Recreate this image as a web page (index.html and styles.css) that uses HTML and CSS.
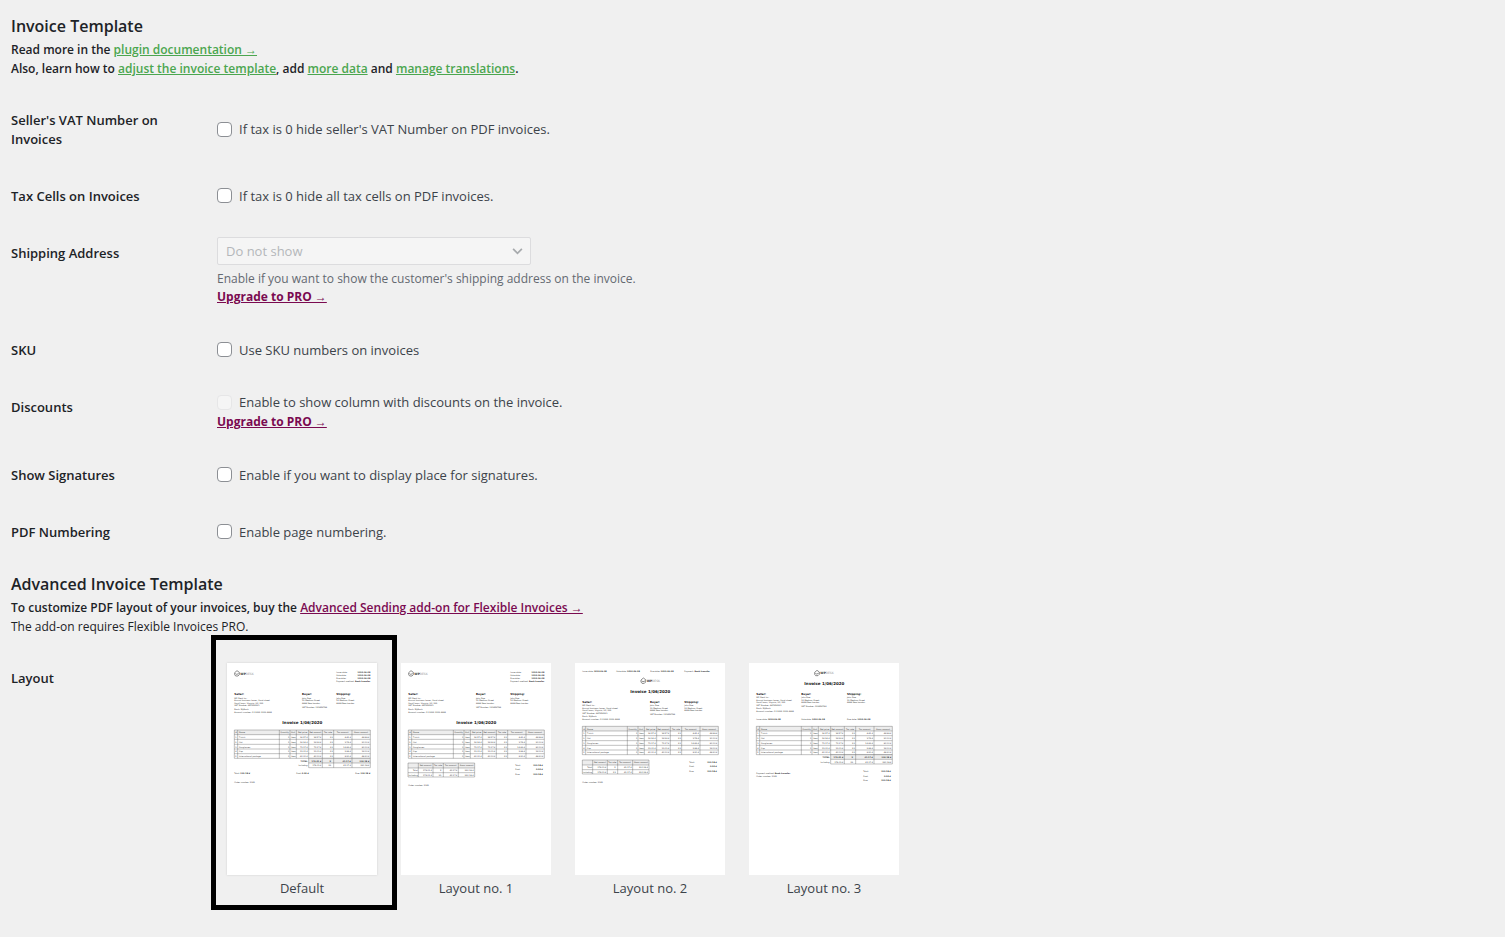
FILE: index.html
```html
<!DOCTYPE html>
<html lang="en">
<head>
  <meta charset="utf-8">
  <title>Invoice Template</title>
  <link rel="stylesheet" href="styles.css">
</head>
<body>
  <!-- Shared parts of the layout previews -->
  <svg class="defs" aria-hidden="true">
    <defs>
      <g id="logo">
        <path d="M8 1 L15 6 L15 13 L11 17 L4 17 L1 13 L1 7 Z M3 10 Q6 14 13 10" fill="none" stroke="#555" stroke-width="2"/>
        <text x="18" y="13" class="logo-bold">WP</text>
        <text x="34" y="13" class="logo-thin">DESK</text>
      </g>
      <g id="dates">
        <text x="328" y="29">Issue date:</text><text x="430" y="29" class="b end">2020-06-08</text>
        <text x="328" y="38">Sale date:</text><text x="430" y="38" class="b end">2020-06-08</text>
        <text x="328" y="47">Due date:</text><text x="430" y="47" class="b end">2020-06-08</text>
        <text x="328" y="56">Payment method:</text><text x="430" y="56" class="b end">Bank transfer</text>
      </g>
      <g id="seller">
        <text x="0" y="0" class="h">Seller:</text>
        <text x="0" y="10">WP Desk Inc.</text>
        <text x="0" y="18">Annual business tower, Sand street</text>
        <text x="0" y="25">Small town, Virginia, US, 222</text>
        <text x="0" y="33">VAT Number: 987654321</text>
        <text x="0" y="43">Bank: MyBank</text>
        <text x="0" y="52">Account number: 11 2222 3333 4444</text>
      </g>
      <g id="buyer">
        <text x="0" y="0" class="h">Buyer:</text>
        <text x="0" y="10">John Doe</text>
        <text x="0" y="18">12 Medium Street</text>
        <text x="0" y="26">8888 New London</text>
        <text x="0" y="38">VAT Number: 123456789</text>
      </g>
      <g id="shipping">
        <text x="0" y="0" class="h">Shipping:</text>
        <text x="0" y="10">John Doe</text>
        <text x="0" y="18">12 Medium Street</text>
        <text x="0" y="26">8888 New London</text>
      </g>
      <g id="items">
        <path d="M22 0H430V14H22Z" fill="#ededed"/>
        <path d="M22 0H430V85H22Z M22 14H430 M22 28H430 M22 43H430 M22 57H430 M22 71H430 M32 0V85 M157 0V85 M189 0V85 M208 0V85 M245 0V85 M286 0V85 M320 0V85 M375 0V85" class="rule"/>
        <text x="25" y="10">#</text><text x="36" y="10">Name</text>
        <g class="mid">
          <text x="173" y="10">Quantity</text><text x="198" y="10">Unit</text><text x="227" y="10">Net price</text><text x="265" y="10">Net amount</text><text x="303" y="10">Tax rate</text><text x="347" y="10">Tax amount</text><text x="402" y="10">Gross amount</text>
        </g>
        <text x="25" y="24">1</text><text x="36" y="24">T-shirt</text>
        <text x="25" y="38">2</text><text x="36" y="38">Hat</text>
        <text x="25" y="53">3</text><text x="36" y="53">Sunglasses</text>
        <text x="25" y="67">4</text><text x="36" y="67">Cap</text>
        <text x="25" y="81">5</text><text x="36" y="81">International package</text>
        <g class="end">
          <text x="187" y="24">1</text><text x="206" y="24">item</text><text x="242" y="24">36.57 €</text><text x="283" y="24">36.57 €</text><text x="317" y="24">23</text><text x="372" y="24">8.41 €</text><text x="427" y="24">44.98 €</text>
          <text x="187" y="38">1</text><text x="206" y="38">item</text><text x="242" y="38">16.26 €</text><text x="283" y="38">16.26 €</text><text x="317" y="38">23</text><text x="372" y="38">3.74 €</text><text x="427" y="38">20.00 €</text>
          <text x="187" y="53">1</text><text x="206" y="53">item</text><text x="242" y="53">73.17 €</text><text x="283" y="53">73.17 €</text><text x="317" y="53">23</text><text x="372" y="53">16.83 €</text><text x="427" y="53">90.00 €</text>
          <text x="187" y="67">1</text><text x="206" y="67">item</text><text x="242" y="67">13.01 €</text><text x="283" y="67">13.01 €</text><text x="317" y="67">23</text><text x="372" y="67">2.99 €</text><text x="427" y="67">16.00 €</text>
          <text x="187" y="81">1</text><text x="206" y="81">item</text><text x="242" y="81">40.00 €</text><text x="283" y="81">40.00 €</text><text x="317" y="81">23</text><text x="372" y="81">9.20 €</text><text x="427" y="81">49.20 €</text>
        </g>
      </g>
      <g id="items-total">
        <path d="M245 0H430V14H245Z" fill="#ededed"/>
        <path d="M245 0H430V28H245Z M245 14H430 M286 0V28 M320 0V28 M375 0V28" class="rule"/>
        <g class="end">
          <text x="242" y="10" class="b">TOTAL</text><text x="283" y="10" class="b">179.01 €</text><text x="312" y="10" class="b">X</text><text x="372" y="10" class="b">41.17 €</text><text x="427" y="10" class="b">220.18 €</text>
          <text x="242" y="24">Including</text><text x="283" y="24">179.01 €</text><text x="312" y="24">23</text><text x="372" y="24">41.17 €</text><text x="427" y="24">220.18 €</text>
        </g>
      </g>
      <g id="summary">
        <path d="M20 0H220V15H20Z" fill="#ededed"/>
        <path d="M20 0H220V42H20Z M20 15H220 M20 29H220 M51 0V42 M95 0V42 M126 0V42 M171 0V42" class="rule"/>
        <g class="mid">
          <text x="73" y="10">Net amount</text><text x="110" y="10">Tax rate</text><text x="148" y="10">Tax amount</text><text x="196" y="10">Gross amount</text>
        </g>
        <g class="end">
          <text x="49" y="25">Total</text><text x="92" y="25">179.01 €</text><text x="120" y="25">X</text><text x="168" y="25">41.17 €</text><text x="217" y="25">220.18 €</text>
          <text x="49" y="39">Including</text><text x="92" y="39">179.01 €</text><text x="120" y="39">23</text><text x="168" y="39">41.17 €</text><text x="217" y="39">220.18 €</text>
        </g>
      </g>
      <g id="due">
        <text x="343" y="0">Total:</text><text x="426" y="0" class="b end">220.18 €</text>
        <text x="343" y="13">Paid:</text><text x="426" y="13" class="b end">0.00 €</text>
        <text x="343" y="26">Due:</text><text x="426" y="26" class="b end">220.18 €</text>
      </g>
    </defs>
  </svg>

  <form class="settings">
    <h2>Invoice Template</h2>
    <p class="intro">
      Read more in the <a class="docs" href="#">plugin documentation →</a><br>
      <strong>Also, learn how to <a class="docs" href="#">adjust the invoice template</a>, add <a class="docs" href="#">more data</a> and <a class="docs" href="#">manage translations</a>.</strong>
    </p>

    <div class="row">
      <label class="name" for="seller-vat">Seller's VAT Number on Invoices</label>
      <div class="field">
        <label class="check"><input type="checkbox" id="seller-vat">If tax is 0 hide seller's VAT Number on PDF invoices.</label>
      </div>
    </div>
    <div class="row">
      <label class="name" for="tax-cells">Tax Cells on Invoices</label>
      <div class="field">
        <label class="check"><input type="checkbox" id="tax-cells">If tax is 0 hide all tax cells on PDF invoices.</label>
      </div>
    </div>
    <div class="row">
      <label class="name" for="shipping-address">Shipping Address</label>
      <div class="field locked">
        <div class="select">
          <select id="shipping-address" disabled><option>Do not show</option></select>
          <svg class="arrow" viewBox="0 0 12 8" aria-hidden="true"><path d="M1 1l5 5 5-5" fill="none" stroke="#a7aaad" stroke-width="2"/></svg>
        </div>
        <p class="description">Enable if you want to show the customer's shipping address on the invoice.</p>
        <a class="pro" href="#">Upgrade to PRO →</a>
      </div>
    </div>
    <div class="row">
      <label class="name" for="sku">SKU</label>
      <div class="field">
        <label class="check"><input type="checkbox" id="sku">Use SKU numbers on invoices</label>
      </div>
    </div>
    <div class="row">
      <label class="name" for="discounts">Discounts</label>
      <div class="field locked">
        <label class="check"><input type="checkbox" id="discounts" disabled>Enable to show column with discounts on the invoice.</label>
        <a class="pro" href="#">Upgrade to PRO →</a>
      </div>
    </div>
    <div class="row">
      <label class="name" for="signatures">Show Signatures</label>
      <div class="field">
        <label class="check"><input type="checkbox" id="signatures">Enable if you want to display place for signatures.</label>
      </div>
    </div>
    <div class="row">
      <label class="name" for="numbering">PDF Numbering</label>
      <div class="field">
        <label class="check"><input type="checkbox" id="numbering">Enable page numbering.</label>
      </div>
    </div>

    <h2 class="second">Advanced Invoice Template</h2>
    <p class="intro">
      To customize PDF layout of your invoices, buy the <a class="pro" href="#">Advanced Sending add-on for Flexible Invoices →</a><br>
      <span class="note">The add-on requires Flexible Invoices PRO.</span>
    </p>

    <div class="row">
      <span class="name" id="layout-name">Layout</span>
      <div class="layouts" role="radiogroup" aria-labelledby="layout-name">
        <label class="layout selected">
          <input type="radio" name="layout" checked>
          <svg class="sheet" viewBox="0 0 450 636" aria-hidden="true">
            <use href="#logo" x="22" y="22"/>
            <use href="#dates"/>
            <use href="#seller" x="22" y="97"/>
            <use href="#buyer" x="225" y="97"/>
            <use href="#shipping" x="328" y="97"/>
            <text x="226" y="183" class="title">Invoice 1/06/2020</text>
            <use href="#items" y="201"/>
            <use href="#items-total" y="286"/>
            <text x="22" y="334">Total: <tspan class="b">220.18 €</tspan></text>
            <text x="208" y="334">Paid: <tspan class="b">0.00 €</tspan></text>
            <text x="430" y="334" class="end">Due: <tspan class="b">220.18 €</tspan></text>
            <text x="22" y="359">Order number: 1042</text>
          </svg>
          Default
        </label>
        <label class="layout">
          <input type="radio" name="layout">
          <svg class="sheet" viewBox="0 0 450 636" aria-hidden="true">
            <use href="#logo" x="22" y="22"/>
            <use href="#dates"/>
            <use href="#seller" x="22" y="97"/>
            <use href="#buyer" x="225" y="97"/>
            <use href="#shipping" x="328" y="97"/>
            <text x="226" y="183" class="title">Invoice 1/06/2020</text>
            <use href="#items" y="201"/>
            <use href="#summary" x="1" y="300"/>
            <use href="#due" y="309"/>
            <text x="22" y="369">Order number: 1042</text>
          </svg>
          Layout no. 1
        </label>
        <label class="layout">
          <input type="radio" name="layout">
          <svg class="sheet" viewBox="0 0 450 636" aria-hidden="true">
            <text x="22" y="27">Issue date: <tspan class="b">2020-06-08</tspan></text>
            <text x="124" y="27">Sale date: <tspan class="b">2020-06-08</tspan></text>
            <text x="226" y="27">Due date: <tspan class="b">2020-06-08</tspan></text>
            <text x="328" y="27">Payment: <tspan class="b">Bank transfer</tspan></text>
            <use href="#logo" x="197" y="44"/>
            <text x="226" y="90" class="title">Invoice 1/06/2020</text>
            <use href="#seller" x="22" y="119"/>
            <use href="#buyer" x="225" y="119"/>
            <use href="#shipping" x="328" y="119"/>
            <use href="#items" y="190"/>
            <use href="#summary" x="2" y="291"/>
            <use href="#due" y="300"/>
            <text x="22" y="359">Order number: 1042</text>
          </svg>
          Layout no. 2
        </label>
        <label class="layout">
          <input type="radio" name="layout">
          <svg class="sheet" viewBox="0 0 450 636" aria-hidden="true">
            <use href="#logo" x="196" y="21"/>
            <text x="226" y="67" class="title">Invoice 1/06/2020</text>
            <use href="#seller" x="22" y="95"/>
            <use href="#buyer" x="157" y="95"/>
            <use href="#shipping" x="294" y="95"/>
            <text x="22" y="171">Issue date: <tspan class="b">2020-06-08</tspan></text>
            <text x="157" y="171">Sale date: <tspan class="b">2020-06-08</tspan></text>
            <text x="294" y="171">Due date: <tspan class="b">2020-06-08</tspan></text>
            <use href="#items" y="190"/>
            <use href="#items-total" y="275"/>
            <text x="22" y="333">Payment method: <tspan class="b">Bank transfer</tspan></text>
            <text x="22" y="342">Order number: 1042</text>
            <use href="#due" y="328"/>
          </svg>
          Layout no. 3
        </label>
      </div>
    </div>
  </form>
</body>
</html>
```

FILE: styles.css
```css
body {
  margin: 0;
  background: #f0f0f0;
  color: #1d2327;
  font-family: "Open Sans", "Noto Sans", sans-serif;
  font-size: 13px;
  line-height: 19px;
}

.defs {
  position: absolute;
  width: 0;
  height: 0;
}

.settings {
  padding: 15px 11px 27px;
}

h2 {
  margin: 0 0 3px;
  font-size: 16px;
  line-height: 22px;
  font-weight: 600;
}

h2.second {
  margin-top: 13px;
}

.intro {
  margin: 0 0 13px;
  font-size: 12px;
  font-weight: 600;
}

.note {
  font-weight: 400;
}

strong,
a {
  font-weight: 600;
}

.docs {
  color: #4ba64f;
}

.pro {
  color: #7a0a50;
}

/* Settings rows: name on the left, field on the right */
.row {
  display: grid;
  grid-template-columns: 160px 1fr;
  column-gap: 46px;
}

.name {
  padding: 20px 0 18px;
  font-weight: 600;
}

.field {
  align-self: center;
  padding: 14px 0;
  color: #3c434a;
}

.field.locked {
  padding: 13px 0 15px;
}

.field .pro {
  display: block;
  width: fit-content;
  font-size: 12px;
  font-weight: 700;
  line-height: 18px;
}

.check {
  display: flex;
  align-items: center;
  width: fit-content;
  line-height: 22px;
}

.check input {
  appearance: none;
  box-sizing: border-box;
  width: 15px;
  height: 15px;
  margin: 0 7px 0 0;
  border: 1px solid #8c8f94;
  border-radius: 4px;
  background: #fff;
}

.check input:disabled {
  border-color: #e6e6e7;
  background: #f5f5f5;
}

.select {
  position: relative;
  max-width: 314px;
}

.select select {
  appearance: none;
  display: block;
  box-sizing: border-box;
  width: 100%;
  height: 28px;
  padding: 0 24px 0 8px;
  border: 1px solid #dcdcde;
  border-radius: 2px;
  background: #f5f5f5;
  color: #b4b7ba;
  font: inherit;
  opacity: 1;
}

.arrow {
  position: absolute;
  top: 11px;
  right: 8px;
  width: 11px;
  height: 7px;
}

.description {
  margin: 5px 0 0;
  color: #646970;
  font-size: 12px;
  line-height: 18px;
}

/* Layout picker */
.layouts {
  display: flex;
  flex-wrap: wrap;
  gap: 24px;
  padding: 14px 10px 0;
  color: #3c434a;
}

.layout {
  position: relative;
  width: 150px;
  text-align: center;
}

.layout input {
  position: absolute;
  opacity: 0;
}

.selected::after {
  content: "";
  position: absolute;
  top: -28px;
  right: -20px;
  bottom: -12px;
  left: -16px;
  border: 5px solid #000;
}

.sheet {
  display: block;
  width: 100%;
  margin-bottom: 4px;
  background: #fff;
}

.selected .sheet {
  box-shadow: 0 0 2px #ccc;
}

/* Text and lines on the preview sheets */
.sheet text,
.defs text {
  fill: #333;
  font-family: "DejaVu Sans", sans-serif;
  font-size: 6px;
}

.sheet .title {
  fill: #111;
  font-size: 12px;
  font-weight: 700;
  text-anchor: middle;
}

.defs .h {
  fill: #111;
  font-size: 8px;
  font-weight: 700;
}

.b {
  font-weight: 700;
}

.end {
  text-anchor: end;
}

.mid {
  text-anchor: middle;
}

.rule {
  fill: none;
  stroke: #444;
  stroke-width: 1;
}

.defs .logo-bold {
  fill: #333;
  font-size: 9px;
  font-weight: 700;
}

.defs .logo-thin {
  fill: #999;
  font-size: 9px;
}
```
